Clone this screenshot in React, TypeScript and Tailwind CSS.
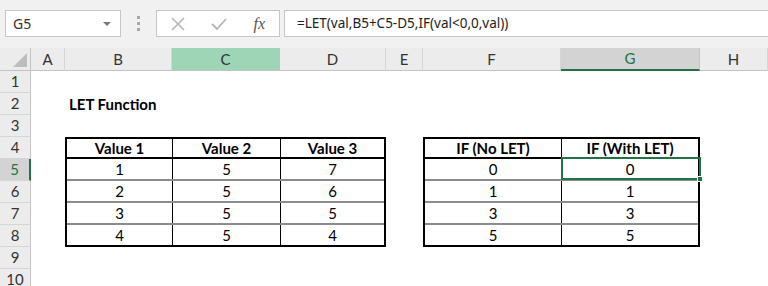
import React from 'react';

const rowStarts = [
    'row-start-2', 'row-start-3', 'row-start-4', 'row-start-5', 'row-start-6',
    'row-start-7', 'row-start-8', 'row-start-9', 'row-start-10', 'row-start-11',
];

const colStarts = [
    'col-start-2', 'col-start-3', 'col-start-4', 'col-start-5',
    'col-start-6', 'col-start-7', 'col-start-8', 'col-start-9',
];

const letters = ['A', 'B', 'C', 'D', 'E', 'F', 'G', 'H'];

const valueRows = [
    [1, 5, 7],
    [2, 5, 6],
    [3, 5, 5],
    [4, 5, 4],
];

const ifRows = [
    [0, 0],
    [1, 1],
    [3, 3],
    [5, 5],
];

function FormulaBar() {
    return (
        <div className="h-[48px] bg-[#f1f1f1] flex items-start pt-[10px] pl-[5px] font-['Noto_Sans',sans-serif]">
            {/* Name box */}
            <div className="w-[116px] h-[27px] bg-white border border-[#c6c6c6] flex items-center justify-between pl-[7px] pr-[9px]">
                <span className="text-[14px] text-[#333]">G5</span>
                <span className="w-0 h-0 border-l-[4px] border-r-[4px] border-t-[4px] border-l-transparent border-r-transparent border-t-[#777]" />
            </div>
            <div className="w-[35px] h-[27px] flex flex-col items-center justify-center gap-[3px]">
                <span className="w-[3px] h-[3px] bg-[#a8a8a8]" />
                <span className="w-[3px] h-[3px] bg-[#a8a8a8]" />
                <span className="w-[3px] h-[3px] bg-[#a8a8a8]" />
            </div>
            {/* Cancel / enter / fx */}
            <div className="w-[124px] h-[27px] bg-white border border-[#c6c6c6] flex items-center justify-between pl-[14px] pr-[14px]">
                <svg width="14" height="14" viewBox="0 0 14 14">
                    <path d="M1 1 L13 13 M13 1 L1 13" stroke="#b5b5b5" strokeWidth="1.6" fill="none" />
                </svg>
                <svg width="16" height="14" viewBox="0 0 16 14">
                    <path d="M1 7 L6 12 L15 2" stroke="#b5b5b5" strokeWidth="1.8" fill="none" />
                </svg>
                <span className="text-[16px] italic text-[#555] font-['Liberation_Serif',serif] leading-none">fx</span>
            </div>
            <div className="ml-[4px] flex-1 h-[27px] bg-white border border-[#c6c6c6] border-r-0 flex items-center pl-[12px]">
                <span className="text-[13.5px] text-[#222]">=LET(val,B5+C5-D5,IF(val&lt;0,0,val))</span>
            </div>
        </div>
    );
}

function ValueTable() {
    return (
        <div className="col-start-3 col-span-3 row-start-5 row-span-5 min-h-0 border-2 border-black flex flex-col bg-white leading-none">
            <div className="h-[20px] shrink-0 border-b-2 border-black grid grid-cols-[105px_108px_1fr] font-bold">
                <div className="flex items-center justify-center">Value 1</div>
                <div className="flex items-center justify-center border-l border-black">Value 2</div>
                <div className="flex items-center justify-center border-l border-black">Value 3</div>
            </div>
            {valueRows.map((r, i) => (
                <div key={i} className={`flex-1 min-h-0 grid grid-cols-[105px_108px_1fr] ${i > 0 ? 'border-t-2 border-[#8c8c8c]' : ''}`}>
                    <div className="flex items-center justify-center">{r[0]}</div>
                    <div className="flex items-center justify-center border-l border-black">{r[1]}</div>
                    <div className="flex items-center justify-center border-l border-black">{r[2]}</div>
                </div>
            ))}
        </div>
    );
}

function IfTable() {
    return (
        <div className="col-start-7 col-span-2 row-start-5 row-span-5 min-h-0 border-2 border-black flex flex-col bg-white leading-none">
            <div className="h-[20px] shrink-0 border-b-2 border-black grid grid-cols-[136px_1fr] font-bold">
                <div className="flex items-center justify-center">IF (No LET)</div>
                <div className="flex items-center justify-center border-l border-black">IF (With LET)</div>
            </div>
            {ifRows.map((r, i) => (
                <div key={i} className={`flex-1 min-h-0 grid grid-cols-[136px_1fr] ${i > 0 ? 'border-t-2 border-[#8c8c8c]' : ''}`}>
                    <div className="flex items-center justify-center">{r[0]}</div>
                    <div className="relative flex items-center justify-center border-l border-black">
                        {r[1]}
                        {i === 0 && (
                            <>
                                <span className="absolute -left-[1px] -top-[2px] -right-[3px] -bottom-[1px] border-2 border-[#217346]" />
                                <span className="absolute -right-[5px] -bottom-[3px] w-[6px] h-[6px] bg-[#217346] border border-white" />
                            </>
                        )}
                    </div>
                </div>
            ))}
        </div>
    );
}

export default function App() {
    return (
        <div className="w-[768px] h-[286px] overflow-hidden bg-white">
            <FormulaBar />
            <div className="grid grid-cols-[31px_34px_107px_108px_106px_37px_138px_139px_1fr] grid-rows-[23px_repeat(10,22px)] font-['Lato',sans-serif] text-[15px] text-black">
                {/* corner */}
                <div className="col-start-1 row-start-1 bg-[#ececec] border-r border-b border-[#c4c4c4] flex items-end justify-end p-[3px]">
                    <svg width="14" height="14" viewBox="0 0 14 14">
                        <path d="M14 0 L14 14 L0 14 Z" fill="#bdbdbd" />
                    </svg>
                </div>
                {letters.map((l, i) => {
                    const selC = l === 'C';
                    const selG = l === 'G';
                    return (
                        <div
                            key={l}
                            className={`${colStarts[i]} row-start-1 flex items-center justify-center text-[15px] border-r ${
                                selC
                                    ? 'bg-[#9fd5b7] border-[#9fd5b7] border-b border-b-[#c4c4c4] text-[#333]'
                                    : selG
                                    ? 'bg-[#d3d3d3] border-[#c4c4c4] border-b-2 border-b-[#217346] text-[#217346]'
                                    : 'bg-[#ececec] border-[#d6d6d6] border-b border-b-[#c4c4c4] text-[#333]'
                            }`}
                        >
                            {l}
                        </div>
                    );
                })}
                {rowStarts.map((rs, i) => {
                    const sel = i === 4;
                    return (
                        <div
                            key={rs}
                            className={`col-start-1 ${rs} flex items-center justify-center border-b ${
                                sel
                                    ? 'bg-[#d3d3d3] border-[#d6d6d6] border-r-2 border-r-[#217346] text-[#217346]'
                                    : 'bg-[#ececec] border-[#d6d6d6] border-r border-r-[#c4c4c4] text-[#333]'
                            }`}
                        >
                            {i + 1}
                        </div>
                    );
                })}
                <div className="col-start-3 col-span-2 row-start-3 flex items-center pl-[4px] font-bold">LET Function</div>
                <ValueTable />
                <IfTable />
            </div>
        </div>
    );
}
